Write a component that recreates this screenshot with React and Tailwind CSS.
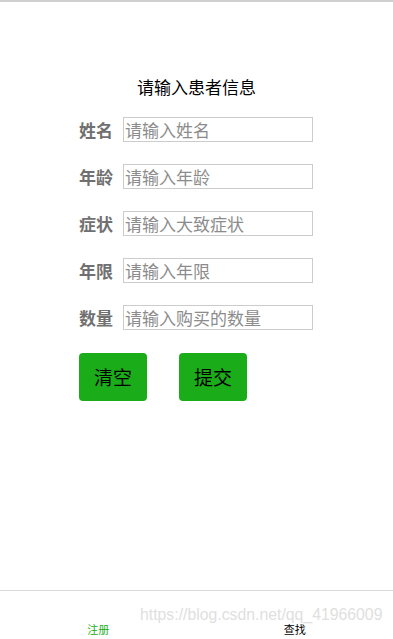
import React from 'react';

const fields = [
  { label: '姓名', placeholder: '请输入姓名' },
  { label: '年龄', placeholder: '请输入年龄' },
  { label: '症状', placeholder: '请输入大致症状' },
  { label: '年限', placeholder: '请输入年限' },
  { label: '数量', placeholder: '请输入购买的数量' },
];

const font = { fontFamily: '"Noto Sans CJK SC", "Liberation Sans", sans-serif' };

function App() {
  return (
    <div className="relative flex h-[639px] w-[393px] flex-col bg-white" style={font}>
      <div className="h-[2px] bg-[#d0d0d0]" />
      <div className="flex-1">
        <h1 className="mt-[72px] text-center text-[17px] leading-[26px] text-black">请输入患者信息</h1>
        <div className="mt-[17px] flex flex-col gap-[22px] pl-[79px]">
          {fields.map((f) => (
            <div key={f.label} className="flex items-center">
              <span className="w-[44px] text-[17px] font-bold leading-[25px] text-[#707070]">{f.label}</span>
              <input
                placeholder={f.placeholder}
                className="h-[25px] w-[190px] border border-[#ccc] px-[1px] text-[17px] leading-[23px] outline-none placeholder:text-[#8c8c8c]"
                style={font}
              />
            </div>
          ))}
        </div>
        <div className="mt-[23px] flex gap-[32px] pl-[79px]">
          <button className="h-[48px] w-[68px] rounded-[4px] bg-[#1aad19] text-[19px] text-black">清空</button>
          <button className="h-[48px] w-[68px] rounded-[4px] bg-[#1aad19] text-[19px] text-black">提交</button>
        </div>
      </div>
      <div className="flex h-[49px] border-t border-[#d9d9d9]">
        <div className="flex flex-1 items-end justify-center pb-[2px] text-[11px] text-[#1aad19]">注册</div>
        <div className="flex flex-1 items-end justify-center pb-[2px] text-[11px] text-black">查找</div>
      </div>
      <div
        className="pointer-events-none absolute left-[140px] top-[603px] whitespace-nowrap text-[15.8px] text-[#e0e0e0]"
        style={{ fontFamily: '"Liberation Sans", Arial, sans-serif' }}
      >
        https://blog.csdn.net/qq_41966009
      </div>
    </div>
  );
}

export default App;
